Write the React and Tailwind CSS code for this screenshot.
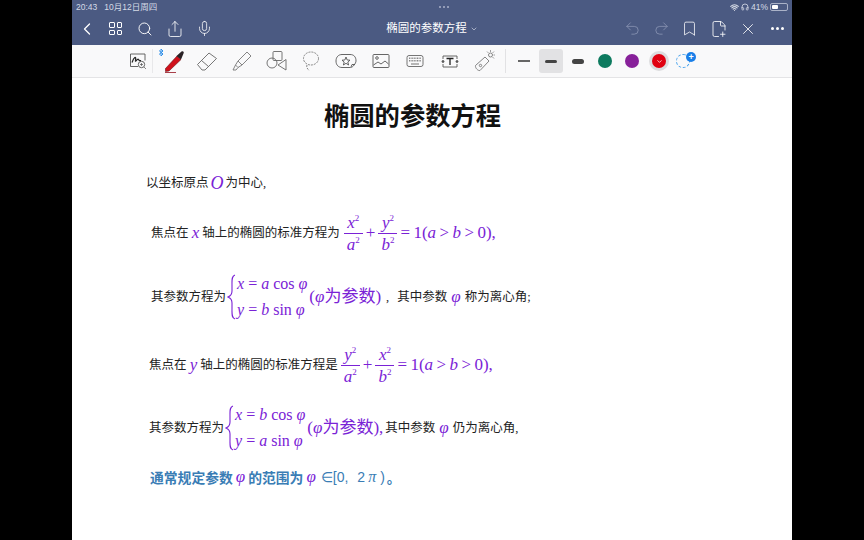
import {
  ChevronLeft,
  ChevronDown,
  Search,
  Share,
  Mic,
  Undo2,
  Redo2,
  Bookmark,
  FilePlus2,
  X,
  Wifi,
  Headphones,
} from "lucide-react";

const cjk = "font-['Liberation_Serif','Noto_Sans_CJK_SC',serif]";

function V({ children, className = "" }) {
  // math variable in purple italic
  return <span className={`italic text-[#7a22d6] font-normal font-['Liberation_Serif',serif] ${className}`}>{children}</span>;
}

function Fraction({ top, bottom }) {
  return (
    <span className="flex flex-col items-center w-[19px] text-[17px] leading-[21px] text-[#7a22d6] italic">
      <span className="border-b border-[#7a22d6] w-full text-center">
        {top}
        <sup className="not-italic text-[9px] align-baseline leading-none relative -top-[7px]">2</sup>
      </span>
      <span>
        {bottom}
        <sup className="not-italic text-[9px] align-baseline leading-none relative -top-[7px]">2</sup>
      </span>
    </span>
  );
}

function Brace() {
  return (
    <svg width="9" height="46" viewBox="0 0 9 46" fill="none" stroke="#7a22d6" strokeWidth="1.1" className="shrink-0">
      <path d="M8 1C4.5 2 5 6 5 11V17C5 20 3.5 22 1 23C3.5 24 5 26 5 29V35C5 40 4.5 44 8 45" />
    </svg>
  );
}

function Ellipse1({ first, second }) {
  return (
    <span className="flex items-center text-[17px] text-[#7a22d6]">
      <Fraction top={first} bottom="a" />
      <span className="mx-[3px] not-italic">+</span>
      <Fraction top={second} bottom="b" />
      <span className="ml-[3px] whitespace-pre">
        =&#8201;1(<i>a</i>&#8201;&gt;&#8201;<i>b</i>&#8201;&gt;&#8201;0),
      </span>
    </span>
  );
}

function System({ a, b }) {
  return (
    <span className="flex items-center">
      <Brace />
      <span className="flex flex-col ml-[1px] gap-[6px] text-[16px] leading-[20px] text-[#7a22d6] whitespace-pre">
        <span>
          <i>x</i> = <i>{a}</i> cos <i>φ</i>
        </span>
        <span>
          <i>y</i> = <i>{b}</i> sin <i>φ</i>
        </span>
      </span>
    </span>
  );
}

function Params() {
  return (
    <span className="text-[17px] text-[#7a22d6] whitespace-pre">
      (<i>φ</i>为参数)
    </span>
  );
}

function HandwriteIcon() {
  return (
    <svg width="18" height="18" viewBox="0 0 18 18" fill="none" stroke="#555" strokeWidth="0.9">
      <path d="M9 14.5H1.5V2H16V8.5" />
      <path d="M3 10.5C5 5 7.5 3.5 6.5 8.5C6 11 8.5 6 9.5 7.5C10 9 10.5 8.5 12 8.5" strokeWidth="1.2" stroke="#222" />
      <circle cx="12.5" cy="12.5" r="3.2" />
      <path d="M11 12.5H14M12.5 11V14M15 15L17 17" strokeWidth="0.7" />
    </svg>
  );
}

function PenIcon() {
  return (
    <span className="relative flex ml-[4px]">
      <svg width="24" height="24" viewBox="0 0 24 24" fill="none">
        <path d="M3.5 19.5L15 7L19 10.5L7 22L3.5 22.5Z" fill="#d0111b" stroke="#6a1218" strokeWidth="0.6" />
        <path d="M14.5 7L19.5 2.5C21 1.5 22.5 3 21.5 4.5L19 10.5Z" fill="#2a2226" />
        <path d="M3 23.5H14" stroke="#a8404a" strokeWidth="1" />
      </svg>
      {/* bluetooth mark */}
      <svg width="6" height="9" viewBox="0 0 6 9" fill="none" stroke="#2f8fe8" strokeWidth="1" className="absolute -left-[4px] -top-[1px]">
        <path d="M1 2.5L5 6L3 8V1L5 3L1 6.5" />
      </svg>
    </span>
  );
}

function EraserIcon() {
  return (
    <svg width="22" height="22" viewBox="0 0 22 22" fill="none" stroke="#666" strokeWidth="0.9">
      <path d="M1.5 14.5L13 3L20.5 8.5L9 20H6Z" />
      <path d="M5.5 10.5L12.5 16.5" />
    </svg>
  );
}

function MarkerIcon() {
  return (
    <svg width="22" height="22" viewBox="0 0 22 22" fill="none" stroke="#777" strokeWidth="0.9">
      <path d="M7 11L16 2L20 6L11 15Z" />
      <path d="M7 11L4.5 15L7 17.5L11 15M4.5 15L2 20H5L7 17.5" />
    </svg>
  );
}

function ShapesIcon() {
  return (
    <svg width="22" height="22" viewBox="0 0 22 22" fill="none" stroke="#666" strokeWidth="0.9">
      <rect x="7" y="1.5" width="9" height="9" rx="1" />
      <circle cx="6" cy="13" r="5" />
      <path d="M20 9.5V20L12 15Z" />
    </svg>
  );
}

function LassoIcon() {
  return (
    <svg width="20" height="22" viewBox="0 0 20 22" fill="none" stroke="#777" strokeWidth="0.9" strokeDasharray="2 1">
      <ellipse cx="10" cy="8.5" rx="7.5" ry="6.5" />
      <path d="M6 15C5 18 7 19 8 20.5" />
    </svg>
  );
}

function StickerIcon() {
  return (
    <svg width="22" height="18" viewBox="0 0 22 18" fill="none" stroke="#555" strokeWidth="0.9">
      <path d="M7 2.5H15C19 2.5 21 5 21 9C21 11 18 15.5 15.5 15.5H7C3.5 15.5 1 13 1 9C1 5 3.5 2.5 7 2.5Z" />
      <path d="M11 5L12.2 8L15 8.2L12.8 10L13.6 13L11 11.3L8.4 13L9.2 10L7 8.2L9.8 8Z" />
      <path d="M16 15L17 12.5H20" />
    </svg>
  );
}

function ImageIcon() {
  return (
    <svg width="18" height="16" viewBox="0 0 18 16" fill="none" stroke="#555" strokeWidth="0.9">
      <rect x="1" y="1.5" width="16" height="13" rx="1" />
      <circle cx="5" cy="5" r="1.3" />
      <path d="M1.5 12L6 9L9 11L13 8L16.5 11" />
    </svg>
  );
}

function KeyboardIcon() {
  return (
    <svg width="18" height="14" viewBox="0 0 18 14" fill="none" stroke="#666" strokeWidth="0.9">
      <rect x="1" y="1.5" width="16" height="11" rx="2" />
      <path d="M3 4.3H15M3 6.8H15" strokeDasharray="1 0.6" strokeWidth="1.6" stroke="#888" />
      <path d="M5 10H13" strokeWidth="1.2" stroke="#888" />
    </svg>
  );
}

function TextBoxIcon() {
  return (
    <svg width="18" height="15" viewBox="0 0 18 15" fill="none" stroke="#555" strokeWidth="0.9">
      <path d="M2 5V2H16V5M2 10V13H16V10" />
      <circle cx="2" cy="7.5" r="1" fill="#555" />
      <circle cx="16" cy="7.5" r="1" fill="#555" />
      <path d="M5.5 4.5H12.5M9 4.5V11" stroke="#222" strokeWidth="1.3" />
    </svg>
  );
}

function LaserIcon() {
  return (
    <svg width="22" height="22" viewBox="0 0 22 22" fill="none" stroke="#777" strokeWidth="0.9">
      <path d="M1.5 15.5L11 7L15 11L6 20.5C4 21 1 18 1.5 15.5Z" />
      <circle cx="6.5" cy="15.5" r="1.2" />
      <circle cx="16.5" cy="5" r="2" />
      <path d="M16.5 0V2M21 5H19.5M20 1.5L18.5 3M13 1.5L14.5 3M20 8.5L18.5 7" strokeWidth="0.7" />
    </svg>
  );
}

function Tool({ children }) {
  return <div className="w-[34.7px] h-full flex items-center justify-center shrink-0">{children}</div>;
}

export default function App() {
  return (
    <div className="w-[864px] h-[540px] bg-black flex justify-center overflow-hidden">
      <div className={`w-[720px] h-full flex flex-col bg-white ${cjk}`}>
        {/* Status bar + nav */}
        <div className="h-[45px] bg-[#4b5a82] text-white font-['Liberation_Sans','Noto_Sans_CJK_SC',sans-serif] shrink-0">
          <div className="h-[14px] flex items-center px-[4px] text-[8.5px] text-[#d5dae6]">
            <span>20:43</span>
            <span className="ml-[7px]">10月12日周四</span>
            <span className="flex-1 flex justify-center gap-[2px]">
              <span className="w-[2px] h-[2px] rounded-full bg-[#aab2c8]" />
              <span className="w-[2px] h-[2px] rounded-full bg-[#aab2c8]" />
              <span className="w-[2px] h-[2px] rounded-full bg-[#aab2c8]" />
            </span>
            <Wifi size={9} strokeWidth={3} />
            <Headphones size={8} className="ml-[2px]" strokeWidth={2.5} />
            <span className="ml-[2px] text-[8.5px]">41%</span>
            <span className="ml-[2px] w-[18px] h-[8px] rounded-[2px] border border-[#aab2c8] flex items-center p-[1px]">
              <span className="w-[6px] h-full bg-white rounded-[1px]" />
            </span>
          </div>
          <div className="h-[31px] flex items-center pb-[2px]">
            <div className="flex items-center w-[150px]">
              <div className="w-[29px] flex justify-center">
                <ChevronLeft size={20} strokeWidth={1.5} />
              </div>
              <div className="w-[29.5px] flex justify-center">
                <div className="grid grid-cols-2 gap-[2px]">
                  <span className="w-[5.5px] h-[5.5px] border border-white rounded-[1px]" />
                  <span className="w-[5.5px] h-[5.5px] border border-white rounded-[1px]" />
                  <span className="w-[5.5px] h-[5.5px] border border-white rounded-[1px]" />
                  <span className="w-[5.5px] h-[5.5px] border border-white rounded-[1px]" />
                </div>
              </div>
              <div className="w-[29.5px] flex justify-center">
                <Search size={16} strokeWidth={1.4} />
              </div>
              <div className="w-[29.5px] flex justify-center">
                <Share size={18} strokeWidth={1.1} />
              </div>
              <div className="w-[29.5px] flex justify-center">
                <Mic size={17} strokeWidth={1.1} />
              </div>
            </div>
            <div className="flex-1 flex items-center justify-center text-[11.5px] text-white ml-[24px]">
              椭圆的参数方程
              <ChevronDown size={8} className="ml-[3px] text-[#d5dae6]" />
            </div>
            <div className="flex items-center w-[174px]">
              <div className="w-[29.3px] flex justify-center text-[#8c97b5]">
                <Undo2 size={17} strokeWidth={1.1} />
              </div>
              <div className="w-[29.3px] flex justify-center text-[#8c97b5]">
                <Redo2 size={17} strokeWidth={1.1} />
              </div>
              <div className="w-[29.3px] flex justify-center -ml-[2px]">
                <Bookmark size={17} strokeWidth={1.1} />
              </div>
              <div className="w-[29.3px] flex justify-center">
                <FilePlus2 size={18} strokeWidth={1.1} />
              </div>
              <div className="w-[29.3px] flex justify-center">
                <X size={18} strokeWidth={1.1} />
              </div>
              <div className="w-[29.3px] flex justify-center gap-[2px]">
                <span className="w-[3px] h-[3px] rounded-full bg-white" />
                <span className="w-[3px] h-[3px] rounded-full bg-white" />
                <span className="w-[3px] h-[3px] rounded-full bg-white" />
              </div>
            </div>
          </div>
        </div>

        {/* Tool row */}
        <div className="h-[33px] bg-[#f9f9fa] border-b border-[#e4e4e6] flex items-center shrink-0 pl-[52px]">
          <div className="w-[28px] flex justify-center">
            <HandwriteIcon />
          </div>
          <div className="w-px h-[24px] bg-[#e8e8ea]" />
          <div className="w-[37px] flex justify-center">
            <PenIcon />
          </div>
          <Tool><EraserIcon /></Tool>
          <Tool><MarkerIcon /></Tool>
          <Tool><ShapesIcon /></Tool>
          <Tool><LassoIcon /></Tool>
          <Tool><StickerIcon /></Tool>
          <Tool><ImageIcon /></Tool>
          <Tool><KeyboardIcon /></Tool>
          <Tool><TextBoxIcon /></Tool>
          <Tool><LaserIcon /></Tool>
          <div className="w-px h-[24px] bg-[#e2e2e4] ml-[3px]" />
          <div className="flex items-center gap-[3px] ml-[6px]">
            <div className="w-[24px] h-[24px] flex items-center justify-center">
              <span className="w-[12px] h-[1.5px] bg-[#666]" />
            </div>
            <div className="w-[24px] h-[24px] flex items-center justify-center bg-[#e2e2e4] rounded-[3px]">
              <span className="w-[12px] h-[3px] rounded-full bg-[#444]" />
            </div>
            <div className="w-[24px] h-[24px] flex items-center justify-center">
              <span className="w-[12px] h-[5px] rounded-full bg-[#444]" />
            </div>
            <div className="w-[24px] h-[24px] flex items-center justify-center">
              <span className="w-[14px] h-[14px] rounded-full bg-[#0d7a5f]" />
            </div>
            <div className="w-[24px] h-[24px] flex items-center justify-center">
              <span className="w-[14px] h-[14px] rounded-full bg-[#87209a]" />
            </div>
            <div className="w-[24px] h-[24px] flex items-center justify-center">
              <span className="w-[20px] h-[20px] rounded-full bg-[#dcdcde] flex items-center justify-center">
                <span className="w-[14px] h-[14px] rounded-full bg-[#e00010] flex items-center justify-center">
                  <ChevronDown size={7} strokeWidth={2.5} className="text-white" />
                </span>
              </span>
            </div>
            <div className="w-[24px] h-[24px] flex items-center justify-center relative">
              <span className="w-[14px] h-[14px] rounded-full border border-dashed border-[#4aa3ec] -ml-[6px]" />
              <span className="absolute top-[3px] right-[2px] w-[10px] h-[10px] rounded-full bg-[#1a7fe8] flex items-center justify-center text-[9px] leading-none font-bold text-white font-['Liberation_Sans',sans-serif]">
                +
              </span>
            </div>
          </div>
        </div>

        {/* Note page */}
        <div className="flex-1 flex flex-col text-[12.5px] text-[#222] overflow-hidden">
          <div className="h-[38px] mt-[18px] pl-[252px] flex items-center text-[25.3px] font-bold text-[#111] font-['Noto_Sans_CJK_SC',sans-serif]">
            椭圆的参数方程
          </div>

          <div className="h-[20px] mt-[39px] pl-[74px] flex items-center whitespace-pre">
            以坐标原点
            <V className="text-[18px] mx-[2px]">O</V>
            为中心,
          </div>

          <div className="h-[50px] mt-[15px] pl-[79px] flex items-center whitespace-pre">
            焦点在 <V className="text-[17px]">x</V> 轴上的椭圆的标准方程为
            <span className="ml-[4px]">
              <Ellipse1 first="x" second="y" />
            </span>
          </div>

          <div className="h-[50px] mt-[14px] pl-[79px] flex items-center whitespace-pre">
            其参数方程为
            <span className="ml-[1px]">
              <System a="a" b="b" />
            </span>
            <span className="ml-[2px]">
              <Params />
            </span>
            <span className="ml-[5px]">,</span>
            <span className="ml-[8px]">其中参数</span>
            <V className="text-[17px] mx-[4px]">φ</V>
            <span>称为离心角;</span>
          </div>

          <div className="h-[50px] mt-[18px] pl-[77px] flex items-center whitespace-pre">
            焦点在 <V className="text-[17px]">y</V> 轴上的椭圆的标准方程是
            <span className="ml-[3px]">
              <Ellipse1 first="y" second="x" />
            </span>
          </div>

          <div className="h-[50px] mt-[13px] pl-[77px] flex items-center whitespace-pre">
            其参数方程为
            <span className="ml-[1px]">
              <System a="b" b="a" />
            </span>
            <span className="ml-[2px]">
              <Params />
            </span>
            <span className="text-[#7a22d6] text-[17px]">,</span>
            <span className="ml-[2px]">其中参数</span>
            <V className="text-[17px] mx-[4px]">φ</V>
            <span>仍为离心角,</span>
          </div>

          <div className="h-[24px] mt-[12px] pl-[78px] flex items-center whitespace-pre text-[13.8px] text-[#3a7db5] font-bold font-['Noto_Sans_CJK_SC',sans-serif]">
            通常规定参数
            <V className="text-[17px] mx-[3px]">φ</V>
            的范围为
            <V className="text-[17px] ml-[3px]">φ</V>
            <span className="ml-[5px] font-normal font-['Liberation_Sans',sans-serif] text-[14px]">∈[0,</span>
            <span className="ml-[9px] font-normal font-['Liberation_Sans',sans-serif] text-[14px]">2</span>
            <span className="ml-[3px] font-normal font-['Liberation_Serif',serif] italic text-[16px]">π</span>
            <span className="ml-[4px] font-normal font-['Liberation_Sans',sans-serif] text-[14px]">)</span>
            <span className="ml-[2px]">。</span>
          </div>
        </div>
      </div>
    </div>
  );
}
